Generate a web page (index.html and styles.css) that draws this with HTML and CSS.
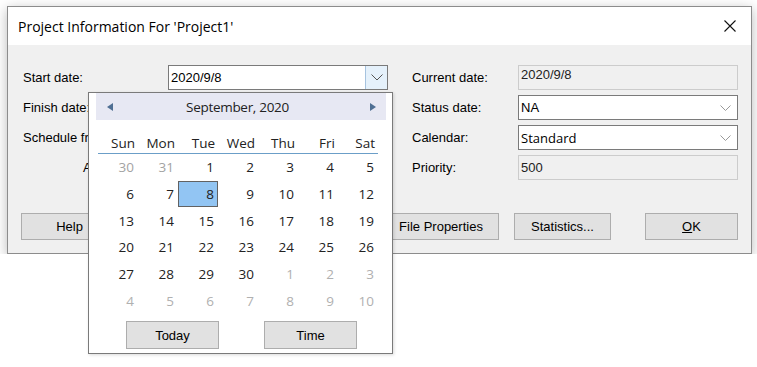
FILE: index.html
```html
<!DOCTYPE html>
<html lang="en">
<head>
    <meta charset="UTF-8">
    <title>Project Information</title>
    <link rel="stylesheet" href="styles.css">
</head>
<body>
    <div class="dialog">
        <div class="titlebar">
            <span class="title">Project Information For 'Project1'</span>
            <svg class="close" width="12" height="12" viewBox="0 0 12 12"><path d="M0.5 0.5L11.5 11.5M11.5 0.5L0.5 11.5" stroke="#111" stroke-width="1.1" fill="none"/></svg>
        </div>
        <div class="body">
            <div class="form">
                <label>Start date:</label>
                <div class="field date">
                    <span class="value">2020/9/8</span>
                    <span class="drop-btn"><svg width="12" height="7" viewBox="0 0 12 7"><polyline points="0.5,0.5 6,6 11.5,0.5" stroke="#555" fill="none"/></svg></span>
                </div>
                <label class="right">Current date:</label>
                <div class="field readonly top">2020/9/8</div>

                <label>Finish date:</label>
                <div class="field readonly">2020/9/8</div>
                <label class="right">Status date:</label>
                <div class="field combo">
                    <span class="value">NA</span>
                    <svg width="11" height="6" viewBox="0 0 11 6"><polyline points="0.5,0.5 5.5,5.5 10.5,0.5" stroke="#999" fill="none"/></svg>
                </div>

                <label>Schedule from:</label>
                <div class="field combo">
                    <span class="value">Project Start Date</span>
                </div>
                <label class="right">Calendar:</label>
                <div class="field combo">
                    <span class="value std">Standard</span>
                    <svg width="11" height="6" viewBox="0 0 11 6"><polyline points="0.5,0.5 5.5,5.5 10.5,0.5" stroke="#999" fill="none"/></svg>
                </div>

                <label class="indent">All tasks begin on:</label>
                <div></div>
                <label class="right">Priority:</label>
                <div class="field readonly">500</div>
            </div>
            <div class="buttons">
                <button class="btn-help">Help</button>
                <div class="button-group">
                    <button class="btn-props">File Properties</button>
                    <button class="btn-stats">Statistics...</button>
                    <button class="btn-ok"><u>O</u>K</button>
                </div>
            </div>
        </div>
    </div>

    <div class="calendar">
        <div class="cal-head">
            <svg width="6" height="8" viewBox="0 0 6 8"><polygon points="6,0 6,8 0,4" fill="#4f6f93"/></svg>
            <span class="month">September, 2020</span>
            <svg width="6" height="8" viewBox="0 0 6 8"><polygon points="0,0 0,8 6,4" fill="#4f6f93"/></svg>
        </div>
        <div class="weekdays">
            <span>Sun</span><span>Mon</span><span>Tue</span><span>Wed</span><span>Thu</span><span>Fri</span><span>Sat</span>
        </div>
        <div class="days">
            <span class="prev">30</span><span class="prev">31</span><span>1</span><span>2</span><span>3</span><span>4</span><span>5</span>
            <span>6</span><span>7</span><span class="selected">8</span><span>9</span><span>10</span><span>11</span><span>12</span>
            <span>13</span><span>14</span><span>15</span><span>16</span><span>17</span><span>18</span><span>19</span>
            <span>20</span><span>21</span><span>22</span><span>23</span><span>24</span><span>25</span><span>26</span>
            <span>27</span><span>28</span><span>29</span><span>30</span><span class="next">1</span><span class="next">2</span><span class="next">3</span>
            <span class="next">4</span><span class="next">5</span><span class="next">6</span><span class="next">7</span><span class="next">8</span><span class="next">9</span><span class="next">10</span>
        </div>
        <div class="cal-buttons">
            <button class="cal-btn">Today</button>
            <button class="cal-btn">Time</button>
        </div>
    </div>
</body>
</html>
```

FILE: styles.css
```css
body {
    margin: 0;
    background: #fff;
    color: #000;
    font-family: "Liberation Sans", Arial, sans-serif;
    font-size: 13px;
}

.dialog {
    margin: 6px 0 0 7px;
    width: 745px;
    height: 248px;
    box-sizing: border-box;
    border: 1px solid #8c8c8c;
    background: #f0f0f0;
    box-shadow: 0 3px 12px rgba(0, 0, 0, 0.28);
    display: flex;
    flex-direction: column;
}

.titlebar {
    height: 38px;
    background: #fff;
    display: flex;
    align-items: center;
    justify-content: space-between;
    padding: 0 15px 0 10px;
}

.title {
    font-family: "Open Sans", sans-serif;
    font-size: 14px;
}

.body {
    flex: 1;
    padding: 20px 13px 0 15px;
}

.form {
    display: grid;
    grid-template-columns: 145px 220px 130px 220px;
    grid-auto-rows: 25px;
    row-gap: 5px;
    align-items: center;
}

.form label {
    white-space: nowrap;
}

.form .right {
    padding-left: 24px;
}

.form .indent {
    padding-left: 60px;
}

.field {
    height: 25px;
    box-sizing: border-box;
    border: 1px solid #7a7a7a;
    background: #fff;
    display: flex;
    align-items: center;
    padding-left: 2px;
}

.field .value {
    flex: 1;
}

.field.readonly {
    background: #f0f0f0;
    border-color: #cccccc;
    color: #222;
}

.field.top {
    align-items: flex-start;
    padding-top: 1px;
}

.field.combo {
    padding-right: 6px;
}

.value.std {
    font-family: "Open Sans", sans-serif;
    font-size: 13px;
}

.field.date {
    padding-right: 0;
}

.drop-btn {
    width: 21px;
    height: 23px;
    background: #e5f1fb;
    border-left: 1px solid #a6c3df;
    display: flex;
    align-items: center;
    justify-content: center;
}

.buttons {
    display: flex;
    margin: 33px 0 0 -2px;
}

.button-group {
    display: flex;
    margin-left: auto;
}

button {
    height: 27px;
    padding: 0;
    background: #e1e1e1;
    border: 1px solid #adadad;
    color: #000;
    font-family: "Liberation Sans", Arial, sans-serif;
    font-size: 13px;
}

.btn-help { width: 97px; }
.btn-props { width: 116px; margin-right: 15px; }
.btn-stats { width: 97px; margin-right: 34px; }
.btn-ok { width: 93px; }

.calendar {
    position: absolute;
    left: 88px;
    top: 92px;
    width: 305px;
    height: 262px;
    box-sizing: border-box;
    border: 1px solid #7a7a7a;
    background: #fff;
    box-shadow: 1px 1px 3px rgba(0, 0, 0, 0.15);
    font-family: "Open Sans", sans-serif;
    font-size: 13.5px;
    color: #222;
}

.cal-head {
    margin: 0 6px 0 7px;
    height: 27px;
    background: #e7e8f3;
    display: flex;
    align-items: center;
    padding: 0 10px 0 11px;
}

.month {
    flex: 1;
    text-align: center;
    padding-right: 8px;
    letter-spacing: -0.3px;
}

.weekdays {
    display: grid;
    grid-template-columns: repeat(7, 40px);
    width: 280px;
    height: 33px;
    margin-left: 9px;
    border-bottom: 1px solid #6b9ec8;
    align-items: end;
}

.weekdays span {
    text-align: right;
    padding-right: 3px;
    line-height: 20px;
}

.days {
    display: grid;
    grid-template-columns: repeat(7, 40px);
    grid-auto-rows: 26.7px;
    width: 280px;
    margin-left: 9px;
}

.days span {
    display: flex;
    align-items: center;
    justify-content: flex-end;
    padding-right: 4px;
}

.days .prev {
    color: #a3a3a3;
}

.days .next {
    color: #b0b0b0;
}

.days .selected {
    background: #92c5f3;
    border: 1px solid #626262;
    padding-right: 3px;
}

.cal-buttons {
    display: flex;
    gap: 45px;
    margin: 7px 0 0 37px;
}

.cal-btn {
    width: 93px;
    height: 28px;
}
```
